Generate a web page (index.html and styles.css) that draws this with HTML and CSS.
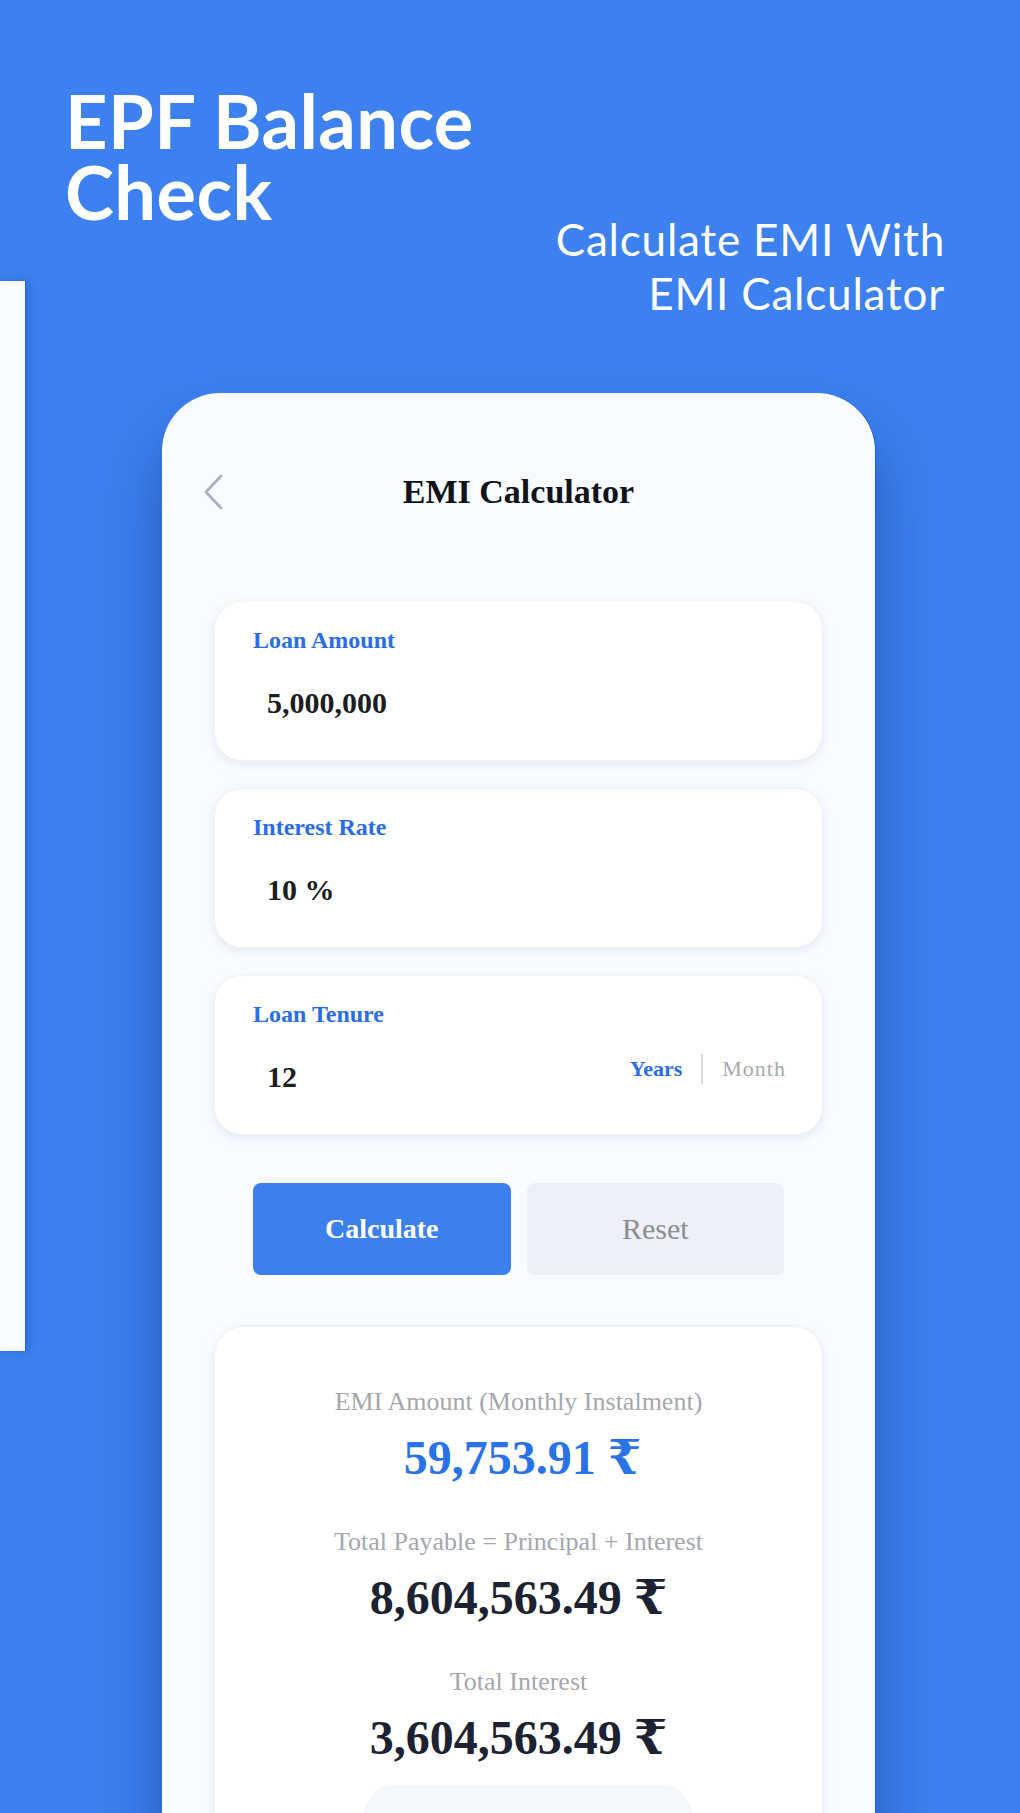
FILE: index.html
```html
<!DOCTYPE html>
<html lang="en">
<head>
<meta charset="utf-8">
<title>EPF Balance Check - EMI Calculator</title>
<link rel="stylesheet" href="styles.css">
</head>
<body>
<div class="side-strip"></div>
<header class="hero">
  <h1 class="hero-title"><span class="hero-line">EPF Balance</span><span class="hero-line">Check</span></h1>
  <p class="hero-sub">Calculate EMI With<br>EMI Calculator</p>
</header>
<main class="phone">
  <div class="phone-head">
    <svg class="back" width="22" height="36" viewBox="0 0 22 36" aria-hidden="true"><path d="M19 2 L4 18 L19 34" fill="none" stroke="#a9b0c1" stroke-width="2.6" stroke-linecap="round" stroke-linejoin="round"/></svg>
    <h2 class="phone-title">EMI Calculator</h2>
    <span></span>
  </div>
  <div class="form">
    <div class="field">
      <div class="field-label">Loan Amount</div>
      <div class="field-value">5,000,000</div>
    </div>
    <div class="field">
      <div class="field-label">Interest Rate</div>
      <div class="field-value">10 %</div>
    </div>
    <div class="field">
      <div class="field-label">Loan Tenure</div>
      <div class="field-row">
        <div class="field-value">12</div>
        <div class="toggle">
          <span class="toggle-on">Years</span>
          <span class="toggle-sep"></span>
          <span class="toggle-off">Month</span>
        </div>
      </div>
    </div>
  </div>
  <div class="actions">
    <button class="btn btn-primary">Calculate</button>
    <button class="btn btn-reset">Reset</button>
  </div>
  <section class="result">
    <div class="result-group">
      <div class="result-label">EMI Amount (Monthly Instalment)</div>
      <div class="result-amount result-amount--blue">59,753.91 ₹</div>
    </div>
    <div class="result-group">
      <div class="result-label">Total Payable = Principal + Interest</div>
      <div class="result-amount">8,604,563.49 ₹</div>
    </div>
    <div class="result-group">
      <div class="result-label">Total Interest</div>
      <div class="result-amount">3,604,563.49 ₹</div>
    </div>
    <div class="result-box"></div>
  </section>
</main>
</body>
</html>
```
FILE: styles.css
```css
* { box-sizing: border-box; }

html, body {
  margin: 0;
  padding: 0;
}

body {
  width: 1020px;
  height: 1813px;
  overflow: hidden;
  position: relative;
  background: #3c81ef;
  font-family: "Liberation Serif", "DejaVu Serif", serif;
}

.side-strip {
  position: absolute;
  left: 0;
  top: 281px;
  width: 25px;
  height: 1070px;
  background: #f8fbff;
  box-shadow: 1px 0 0 #1f68e2, 4px 0 10px rgba(10, 50, 140, 0.25);
}

.hero {
  display: flex;
  justify-content: space-between;
  align-items: flex-start;
  height: 393px;
  padding: 85px 75px 0 65px;
}

.hero-title {
  margin: 0;
  font-family: Lato, "Open Sans", sans-serif;
  font-weight: 700;
  font-size: 74px;
  line-height: 71px;
  letter-spacing: 0.4px;
  color: #ffffff;
}

.hero-line {
  display: block;
}

.hero-sub {
  margin: 127px 0 0;
  font-family: Lato, "Open Sans", sans-serif;
  font-weight: 400;
  font-size: 44px;
  line-height: 54px;
  letter-spacing: 0.8px;
  color: #ffffff;
  text-align: right;
}

.phone {
  margin-left: 162px;
  width: 713px;
  height: 1480px;
  background: #f8fbff;
  border-radius: 58px 58px 0 0;
  box-shadow: 1px 0 0 #1d64dc, 0 40px 60px rgba(8, 35, 110, 0.45);
  padding: 80px 52px 0;
}

.phone-head {
  display: grid;
  grid-template-columns: 1fr auto 1fr;
  align-items: center;
  height: 38px;
  margin: 0 -12px;
}

.back {
  display: block;
}

.phone-title {
  margin: 0;
  font-size: 34px;
  font-weight: 700;
  line-height: 38px;
  color: #111318;
}

.form {
  margin-top: 90px;
  display: flex;
  flex-direction: column;
  gap: 27px;
}

.field {
  height: 160px;
  background: #ffffff;
  border-radius: 28px;
  border: 1px solid #f1f3f7;
  box-shadow: 0 3px 8px rgba(190, 200, 220, 0.35);
  padding: 24px 36px 0 38px;
}

.field-label {
  font-size: 24px;
  font-weight: 700;
  line-height: 29px;
  color: #2a6de6;
}

.field-value {
  margin-top: 30px;
  margin-left: 14px;
  font-size: 30px;
  font-weight: 700;
  line-height: 36px;
  color: #1b1d22;
}

.field-row {
  display: flex;
  justify-content: space-between;
  align-items: flex-start;
  margin-top: 30px;
}

.field-row .field-value {
  margin-top: 0;
}

.toggle {
  display: flex;
  align-items: center;
  gap: 19px;
  height: 30px;
  margin-top: -5px;
}

.toggle-on {
  font-size: 22px;
  font-weight: 700;
  color: #2a6de6;
}

.toggle-sep {
  width: 2px;
  height: 30px;
  background: #d6d8dd;
}

.toggle-off {
  font-size: 22px;
  letter-spacing: 1px;
  color: #a7a9ae;
}

.actions {
  display: flex;
  gap: 16px;
  margin-top: 48px;
  padding: 0 39px;
}

.btn {
  flex: 1;
  height: 92px;
  border: none;
  border-radius: 8px;
  font-family: "Liberation Serif", "DejaVu Serif", serif;
  font-size: 28px;
}

.btn-primary {
  background: #3c80ee;
  color: #ffffff;
  font-weight: 700;
}

.btn-reset {
  background: #edf0f8;
  color: #8d8e92;
  font-size: 30px;
}

.result {
  margin-top: 51px;
  background: #ffffff;
  border-radius: 30px 30px 0 0;
  border: 1px solid #f1f3f7;
  box-shadow: 0 3px 8px rgba(190, 200, 220, 0.35);
  padding-top: 60px;
  height: 700px;
  display: flex;
  flex-direction: column;
  align-items: center;
  text-align: center;
}

.result-group + .result-group {
  margin-top: 41px;
}

.result-label {
  font-size: 26px;
  line-height: 30px;
  color: #a4a7ae;
}

.result-amount {
  margin-top: 13px;
  font-size: 48px;
  font-weight: 700;
  line-height: 56px;
  color: #1c2232;
}

.result-amount--blue {
  margin-left: 8px;
  color: #2a72e8;
}

.result-box {
  align-self: flex-start;
  margin: 19px 0 0 149px;
  width: 328px;
  height: 120px;
  border-radius: 30px;
  background: #f4f8fd;
}
```
